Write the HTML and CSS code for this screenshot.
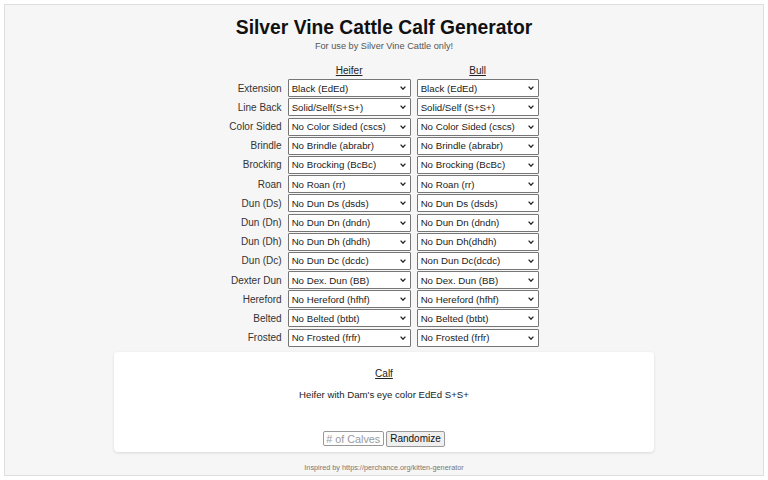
FILE: index.html
```html
<!DOCTYPE html>
<html>
<head>
<meta charset="utf-8">
<title>Silver Vine Cattle Calf Generator</title>
<link rel="stylesheet" href="styles.css">
</head>
<body>
<div class="page">
  <h1 class="title">Silver Vine Cattle Calf Generator</h1>
  <p class="subtitle">For use by Silver Vine Cattle only!</p>

  <div class="grid">
    <span></span><span class="colhead">Heifer</span><span class="colhead">Bull</span>

    <label class="lbl">Extension</label>
    <select class="sel"><option>Black (EdEd)</option></select>
    <select class="sel"><option>Black (EdEd)</option></select>

    <label class="lbl">Line Back</label>
    <select class="sel"><option>Solid/Self(S+S+)</option></select>
    <select class="sel"><option>Solid/Self (S+S+)</option></select>

    <label class="lbl">Color Sided</label>
    <select class="sel"><option>No Color Sided (cscs)</option></select>
    <select class="sel"><option>No Color Sided (cscs)</option></select>

    <label class="lbl">Brindle</label>
    <select class="sel"><option>No Brindle (abrabr)</option></select>
    <select class="sel"><option>No Brindle (abrabr)</option></select>

    <label class="lbl">Brocking</label>
    <select class="sel"><option>No Brocking (BcBc)</option></select>
    <select class="sel"><option>No Brocking (BcBc)</option></select>

    <label class="lbl">Roan</label>
    <select class="sel"><option>No Roan (rr)</option></select>
    <select class="sel"><option>No Roan (rr)</option></select>

    <label class="lbl">Dun (Ds)</label>
    <select class="sel"><option>No Dun Ds (dsds)</option></select>
    <select class="sel"><option>No Dun Ds (dsds)</option></select>

    <label class="lbl">Dun (Dn)</label>
    <select class="sel"><option>No Dun Dn (dndn)</option></select>
    <select class="sel"><option>No Dun Dn (dndn)</option></select>

    <label class="lbl">Dun (Dh)</label>
    <select class="sel"><option>No Dun Dh (dhdh)</option></select>
    <select class="sel"><option>No Dun Dh(dhdh)</option></select>

    <label class="lbl">Dun (Dc)</label>
    <select class="sel"><option>No Dun Dc (dcdc)</option></select>
    <select class="sel"><option>Non Dun Dc(dcdc)</option></select>

    <label class="lbl">Dexter Dun</label>
    <select class="sel"><option>No Dex. Dun (BB)</option></select>
    <select class="sel"><option>No Dex. Dun (BB)</option></select>

    <label class="lbl">Hereford</label>
    <select class="sel"><option>No Hereford (hfhf)</option></select>
    <select class="sel"><option>No Hereford (hfhf)</option></select>

    <label class="lbl">Belted</label>
    <select class="sel"><option>No Belted (btbt)</option></select>
    <select class="sel"><option>No Belted (btbt)</option></select>

    <label class="lbl">Frosted</label>
    <select class="sel"><option>No Frosted (frfr)</option></select>
    <select class="sel"><option>No Frosted (frfr)</option></select>
  </div>

  <div class="card">
    <div class="calfhead">Calf</div>
    <div class="calftext">Heifer with Dam's eye color EdEd S+S+</div>
    <div class="controls">
      <input class="count" type="text" placeholder="# of Calves">
      <button class="btn">Randomize</button>
    </div>
  </div>

  <p class="footer">Inspired by https://perchance.org/kitten-generator</p>
</div>
</body>
</html>
```

FILE: styles.css
```css
html, body {
  margin: 0;
  padding: 0;
  background: #ffffff;
}
body {
  padding: 4px;
  font-family: "Liberation Sans", Arial, sans-serif;
  color: #222;
}
.page {
  box-sizing: border-box;
  height: 472px;
  border: 1px solid #dedede;
  background: #f6f6f6;
  padding-top: 12px;
  display: flex;
  flex-direction: column;
  align-items: center;
}
.title {
  margin: 0;
  font-size: 19.3px;
  line-height: 22px;
  font-weight: bold;
  color: #111;
}
.subtitle {
  margin: 1px 0 0;
  font-size: 9.2px;
  line-height: 12px;
  color: #555;
}
.grid {
  margin-top: 13px;
  display: grid;
  grid-template-columns: auto 123px 122px;
  grid-auto-rows: 18px;
  grid-template-rows: 13px;
  column-gap: 6px;
  row-gap: 1.2px;
  align-items: center;
}
.colhead {
  text-align: center;
  font-size: 10px;
  line-height: 12px;
  text-decoration: underline;
  color: #222;
  align-self: start;
}
.lbl {
  text-align: right;
  font-size: 10px;
  color: #333;
}
.sel {
  -webkit-appearance: none;
  appearance: none;
  box-sizing: border-box;
  height: 18px;
  width: 100%;
  margin: 0;
  font-family: "Liberation Sans", Arial, sans-serif;
  font-size: 9.7px;
  color: #1a1a1a;
  background-color: #fff;
  background-image: url("data:image/svg+xml,%3Csvg xmlns='http://www.w3.org/2000/svg' width='6' height='4' viewBox='0 0 6 4'%3E%3Cpath d='M0.6 0.6 L3 3.2 L5.4 0.6' fill='none' stroke='%23222' stroke-width='1.3'/%3E%3C/svg%3E");
  background-repeat: no-repeat;
  background-position: right 4px center;
  background-size: 6px 4px;
  border: 1px solid #767676;
  border-radius: 1px;
  padding: 0 12px 0 3px;
}
.card {
  box-sizing: border-box;
  margin-top: 5px;
  width: 540px;
  height: 100px;
  background: #fff;
  border-radius: 4px;
  box-shadow: 0 1px 3px rgba(0,0,0,0.12);
  display: flex;
  flex-direction: column;
  align-items: center;
  padding-top: 16px;
}
.calfhead {
  font-size: 10px;
  line-height: 12px;
  text-decoration: underline;
  color: #222;
}
.calftext {
  margin-top: 9px;
  font-size: 9.65px;
  line-height: 12px;
  color: #222;
}
.controls {
  margin-top: auto;
  margin-bottom: 5px;
  display: flex;
  align-items: center;
  gap: 2px;
}
.count {
  box-sizing: border-box;
  width: 61px;
  height: 15px;
  margin: 0;
  padding: 0 2px;
  font-family: "Liberation Sans", Arial, sans-serif;
  font-size: 10.8px;
  border: 1px solid #999;
  border-radius: 2px;
  background: #fff;
}
.count::placeholder {
  color: #9a9a9a;
}
.btn {
  box-sizing: border-box;
  height: 16px;
  margin: 0;
  padding: 0 3px;
  font-family: "Liberation Sans", Arial, sans-serif;
  font-size: 10px;
  color: #111;
  background: #efefef;
  border: 1px solid #999;
  border-radius: 2px;
}
.footer {
  margin: 11px 0 0;
  font-size: 7.3px;
  line-height: 9px;
  color: #777;
}
```
